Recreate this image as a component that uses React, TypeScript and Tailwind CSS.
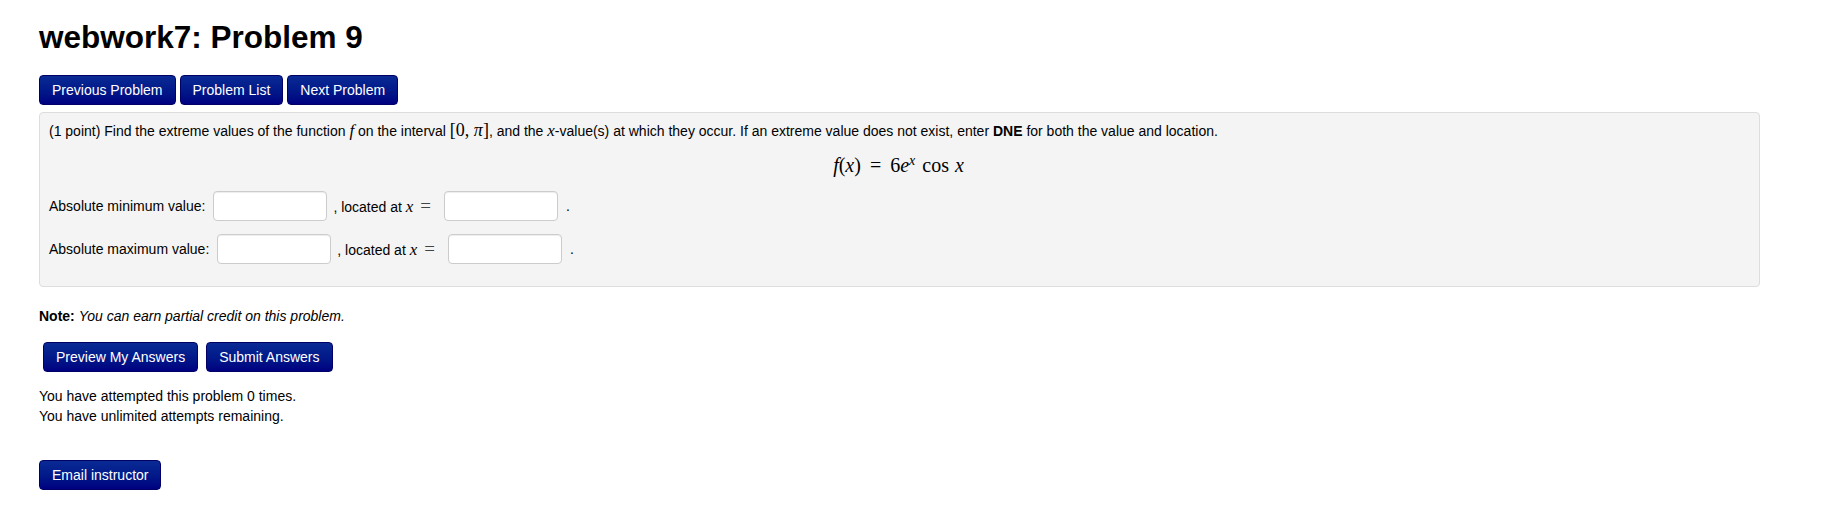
import React from "react";

const navBtn =
  "inline-flex items-center h-[30px] px-[12px] rounded-[4px] border border-[#000066] bg-linear-to-b from-[#0b2a94] to-[#000080] text-white text-[14px] leading-[20px]";

function M({ children }: { children: React.ReactNode }) {
  return <span className="font-['Liberation_Serif','DejaVu_Serif',serif] italic text-[17px]">{children}</span>;
}

function Answer() {
  return (
    <span className="inline-block align-middle w-[114px] h-[30px] bg-white border border-[#cccccc] rounded-[4px] shadow-[inset_0_1px_1px_rgba(0,0,0,0.075)]" />
  );
}

function Row({ label }: { label: string }) {
  return (
    <div className="flex items-center h-[30px]">
      <span>{label}</span>
      <span className="ml-[8px]">
        <Answer />
      </span>
      <span className="ml-[6px]">
        , located at <M>x</M>
        <span className="ml-[7px] font-['Liberation_Serif',serif] text-[19px] text-[#444]">=</span>
      </span>
      <span className="ml-[13px]">
        <Answer />
      </span>
      <span className="ml-[8px]">.</span>
    </div>
  );
}

export default function App() {
  return (
    <div className="min-h-screen bg-white text-black font-['Liberation_Sans',Arial,sans-serif] text-[14px] leading-[20px] px-[39px] pt-[17px]">
      <h1 className="text-[31.5px] font-bold leading-[40px]">webwork7: Problem 9</h1>

      <div className="flex gap-[4px] mt-[18px]">
        <span className={navBtn}>Previous Problem</span>
        <span className={navBtn}>Problem List</span>
        <span className={navBtn}>Next Problem</span>
      </div>

      <div className="w-[1721px] mt-[7px] bg-[#f4f4f4] border border-[#dddddd] rounded-[4px] pl-[9px] pr-[11px] pt-[7px] pb-[22px]">
        <p>
          (1 point) Find the extreme values of the function <M>f</M> on the interval{" "}
          <span className="font-['Liberation_Serif',serif] text-[18px]">
            [0, <i>π</i>]
          </span>
          , and the <M>x</M>-value(s) at which they occur. If an extreme value does not exist, enter <b>DNE</b> for both
          the value and location.
        </p>
        <p className="text-center mt-[11px] font-['Liberation_Serif','DejaVu_Serif',serif] text-[20px] leading-[26px]">
          <i>f</i>(<i>x</i>)<span className="mx-[9px]">=</span>6<i>e</i>
          <sup className="text-[14px]">
            <i>x</i>
          </sup>
          <span className="ml-[7px]">cos</span>
          <i className="ml-[6px]">x</i>
        </p>
        <div className="mt-[13px]">
          <Row label="Absolute minimum value:" />
        </div>
        <div className="mt-[13px]">
          <Row label="Absolute maximum value:" />
        </div>
      </div>

      <p className="mt-[19px]">
        <b>Note:</b> <i>You can earn partial credit on this problem.</i>
      </p>

      <div className="flex gap-[8px] mt-[16px] ml-[4px]">
        <span className={navBtn}>Preview My Answers</span>
        <span className={navBtn}>Submit Answers</span>
      </div>

      <div className="mt-[14px]">
        <p>You have attempted this problem 0 times.</p>
        <p>You have unlimited attempts remaining.</p>
      </div>

      <div className="mt-[34px] flex">
        <span className={navBtn}>Email instructor</span>
      </div>
    </div>
  );
}
